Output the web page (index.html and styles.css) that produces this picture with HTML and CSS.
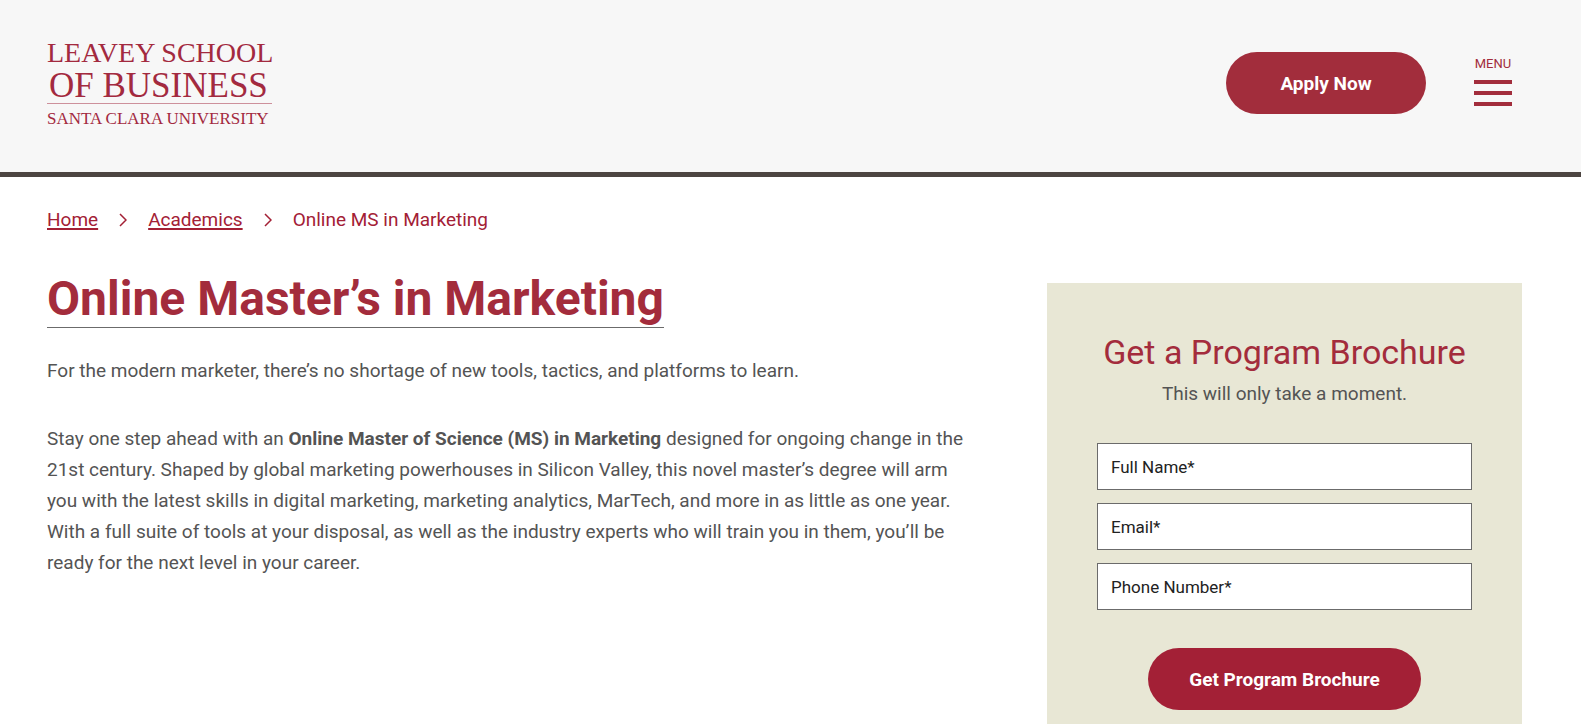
FILE: index.html
```html
<!DOCTYPE html>
<html lang="en">
<head>
  <meta charset="UTF-8">
  <meta name="viewport" content="width=device-width, initial-scale=1.0">
  <title>Online Master’s in Marketing | Leavey School of Business</title>
  <link rel="stylesheet" href="styles.css">
</head>
<body>
  <header class="site-header">
    <a class="logo" href="#" aria-label="Leavey School of Business, Santa Clara University">
      <svg width="240" height="90" viewBox="0 0 240 90">
        <text x="0" y="22" font-size="28">LEAVEY SCHOOL</text>
        <text x="2" y="57" font-size="35">OF BUSINESS</text>
        <rect x="0" y="63" width="225" height="1"/>
        <text x="0" y="84" font-size="17">SANTA CLARA UNIVERSITY</text>
      </svg>
    </a>
    <div class="header-actions">
      <button class="btn btn-apply" type="button">Apply Now</button>
      <button class="menu" type="button">
        <span class="menu-label">MENU</span>
        <span class="menu-bar"></span>
        <span class="menu-bar"></span>
        <span class="menu-bar"></span>
      </button>
    </div>
  </header>

  <main class="page">
    <nav class="breadcrumb" aria-label="Breadcrumb">
      <a href="#">Home</a>
      <svg class="chevron" width="8" height="14" viewBox="0 0 8 14"><path d="M1 1l6 6-6 6"/></svg>
      <a href="#">Academics</a>
      <svg class="chevron" width="8" height="14" viewBox="0 0 8 14"><path d="M1 1l6 6-6 6"/></svg>
      <span>Online MS in Marketing</span>
    </nav>

    <div class="columns">
      <article class="intro">
        <h1>Online Master’s in Marketing</h1>
        <p>For the modern marketer, there’s no shortage of new tools, tactics, and platforms to learn.</p>
        <p>Stay one step ahead with an <strong>Online Master of Science (MS) in Marketing</strong> designed for ongoing change in the 21st century. Shaped by global marketing powerhouses in Silicon Valley, this novel master’s degree will arm you with the latest skills in digital marketing, marketing analytics, MarTech, and more in as little as one year. With a full suite of tools at your disposal, as well as the industry experts who will train you in them, you’ll be ready for the next level in your career.</p>
      </article>

      <form class="brochure">
        <h2>Get a Program Brochure</h2>
        <p>This will only take a moment.</p>
        <div class="field">
          <input id="name" type="text" placeholder=" ">
          <label for="name">Full Name*</label>
        </div>
        <div class="field">
          <input id="email" type="email" placeholder=" ">
          <label for="email">Email*</label>
        </div>
        <div class="field">
          <input id="phone" type="tel" placeholder=" ">
          <label for="phone">Phone Number*</label>
        </div>
        <button class="btn btn-brochure" type="submit">Get Program Brochure</button>
      </form>
    </div>
  </main>
</body>
</html>
```
FILE: styles.css
```css
* {
  box-sizing: border-box;
}
body {
  margin: 0;
  background-color: #fff;
  color: #545454;
  font-family: Roboto, "Liberation Sans", sans-serif;
  font-size: 19px;
  line-height: 31px;
}

/* header */
.site-header {
  display: flex;
  justify-content: space-between;
  align-items: flex-start;
  height: 177px;
  padding: 40px 69px 0 47px;
  background-color: #f7f7f7;
  border-bottom: 5px solid #4c4541;
}
.logo svg {
  display: block;
  overflow: visible;
  fill: #a32a3f;
  font-family: "Liberation Serif", serif;
}
.logo rect {
  opacity: 0.5;
}
.header-actions {
  display: flex;
  align-items: flex-start;
  gap: 48px;
  padding-top: 12px;
}
.btn {
  height: 62px;
  border: 0;
  border-radius: 31px;
  color: #fff;
  font-family: inherit;
  font-size: 19px;
  font-weight: bold;
  cursor: pointer;
}
.btn-apply {
  width: 200px;
  background-color: #a22d3c;
}
.menu {
  display: flex;
  flex-direction: column;
  align-items: center;
  gap: 7px;
  width: 38px;
  padding: 3px 0 0;
  border: 0;
  background: none;
  color: #a22d3c;
  font-family: inherit;
  font-size: 13px;
  line-height: 18px;
  cursor: pointer;
}
.menu-bar {
  width: 38px;
  height: 4px;
  background-color: #a22d3c;
}

/* content */
.page {
  padding: 27px 59px 0 47px;
}
.breadcrumb {
  display: flex;
  align-items: center;
  gap: 21px;
  color: #a32035;
}
.breadcrumb a {
  color: inherit;
  text-decoration-thickness: 2px;
  text-underline-offset: 2px;
}
.chevron {
  fill: none;
  stroke: #a32035;
  stroke-width: 1.5;
}
.columns {
  display: flex;
  justify-content: space-between;
  align-items: flex-start;
  gap: 48px;
}
.intro {
  flex: 1;
  max-width: 925px;
  padding-top: 36px;
}
h1 {
  width: fit-content;
  margin: 0 0 27px;
  border-bottom: 1px solid #6b6b6b;
  color: #a32c3c;
  font-size: 48px;
  line-height: 56px;
}
.intro p {
  margin: 0 0 37px;
}
.brochure {
  display: flex;
  flex-direction: column;
  align-items: center;
  width: 475px;
  margin-top: 48px;
  padding: 47px 50px 14px;
  background-color: #e8e7d5;
}
h2 {
  margin: 0;
  color: #a32c3c;
  font-size: 34px;
  font-weight: normal;
  line-height: 44px;
  text-align: center;
}
.brochure p {
  margin: 4px 0 34px;
}
.field {
  position: relative;
  width: 100%;
  margin-bottom: 13px;
  font-size: 17px;
}
.field input {
  display: block;
  width: 100%;
  height: 47px;
  padding: 0 13px;
  border: 1px solid #6b6b6b;
  border-radius: 0;
  background-color: #fff;
  font: inherit;
}
/* label sits in the box until something is typed */
.field label {
  position: absolute;
  top: 9px;
  left: 14px;
  color: #222;
  pointer-events: none;
}
.field input:not(:placeholder-shown) + label {
  display: none;
}
.btn-brochure {
  width: 273px;
  margin-top: 25px;
  background-color: #a32036;
}
```
